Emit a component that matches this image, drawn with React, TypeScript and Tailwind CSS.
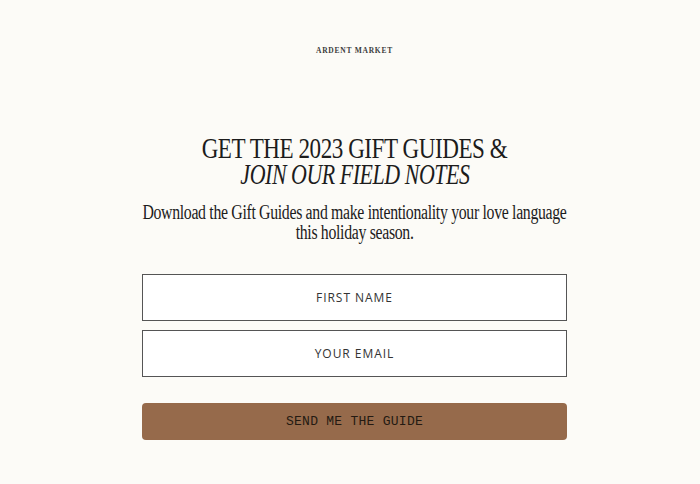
import React from "react";

export default function App() {
  return (
    <div className="min-h-[484px] w-full bg-[#fcfbf7] flex justify-center pl-[9px]">
      <div className="w-[425px] flex flex-col items-center">
        <div className="mt-[46px] text-[7.5px] leading-[10px] font-bold tracking-[0.1em] text-[#3d3d3d] [font-family:'Liberation_Serif',serif]">
          ARDENT MARKET
        </div>
        <h1 className="mt-[79px] flex flex-col items-center text-[30px] leading-[26px] tracking-[-0.02em] text-[#1c1c1c] [font-family:'Liberation_Serif',serif] font-normal">
          <span className="whitespace-nowrap scale-x-[0.77]">GET THE 2023 GIFT GUIDES &amp;</span>
          <span className="whitespace-nowrap italic scale-x-[0.73]">JOIN OUR FIELD NOTES</span>
        </h1>
        <p className="mt-[15px] flex flex-col items-center text-[20px] leading-[20px] tracking-[-0.02em] text-[#1c1c1c] [font-family:'Liberation_Serif',serif]">
          <span className="whitespace-nowrap scale-x-[0.79]">Download the Gift Guides and make intentionality your love language</span>
          <span className="whitespace-nowrap scale-x-[0.79]">this holiday season.</span>
        </p>
        <form className="mt-[32px] w-full flex flex-col" onSubmit={(e) => e.preventDefault()}>
          <input
            placeholder="FIRST NAME"
            className="h-[47px] w-full border border-[#555] bg-white text-center text-[12px] tracking-[0.08em] text-[#333] placeholder:text-[#333] outline-none [font-family:'Open_Sans',sans-serif]"
          />
          <input
            placeholder="YOUR EMAIL"
            className="mt-[9px] h-[47px] w-full border border-[#555] bg-white text-center text-[12px] tracking-[0.08em] text-[#333] placeholder:text-[#333] outline-none [font-family:'Open_Sans',sans-serif]"
          />
          <button
            type="submit"
            className="mt-[26px] h-[37px] w-full rounded-[4px] bg-[#966a4b] text-[13px] tracking-[0.02em] text-[#241a12] [font-family:'Liberation_Mono',monospace]"
          >
            SEND ME THE GUIDE
          </button>
        </form>
      </div>
    </div>
  );
}
